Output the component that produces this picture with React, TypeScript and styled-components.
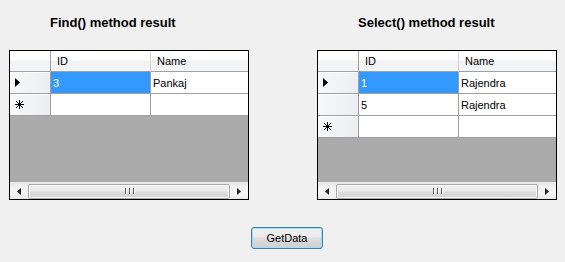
import React from "react";
import styled, { createGlobalStyle } from "styled-components";

const Global = createGlobalStyle`
  html, body { margin: 0; padding: 0; background: #f0f0f0; }
  body { font-family: "Liberation Sans", Arial, sans-serif; }
`;

const Page = styled.div`
  width: 565px;
  height: 262px;
  display: flex;
  flex-direction: column;
  background: #f0f0f0;
`;

const Panels = styled.div`
  display: flex;
  gap: 68px;
  padding-left: 9px;
`;

const Panel = styled.div`
  display: flex;
  flex-direction: column;
  width: 240px;
`;

const Title = styled.div`
  padding: 15px 0 0 41px;
  height: 15px;
  line-height: 15px;
  margin-bottom: 20px;
  font-size: 13px;
  font-weight: bold;
  color: #000;
  white-space: nowrap;
`;

const Grid = styled.div`
  width: 240px;
  height: 150px;
  box-sizing: border-box;
  border: 1px solid #000;
  display: flex;
  flex-direction: column;
  overflow: hidden;
  background: #ababab;
`;

const Body = styled.div`
  flex: 1;
  display: flex;
  flex-direction: column;
  overflow: hidden;
`;

const Row = styled.div<{ $h: number }>`
  display: flex;
  height: ${(p) => p.$h}px;
  flex: none;
`;

const HeaderCell = styled.div<{ $w: number; $first?: boolean }>`
  width: ${(p) => p.$w}px;
  flex: none;
  box-sizing: border-box;
  height: 100%;
  border-bottom: 1px solid #a0a0a0;
  border-right: 1px solid ${(p) => (p.$first ? "#a0a0a0" : "#d5d5d5")};
  background: linear-gradient(#ffffff 0%, #ffffff 45%, #f1f2f4 50%, #f4f5f7 100%);
  font-size: 11px;
  color: #000;
  padding: 4px 0 0 6px;
  white-space: nowrap;
  overflow: hidden;
`;

const RowHead = styled.div`
  width: 41px;
  flex: none;
  box-sizing: border-box;
  height: 100%;
  border-right: 1px solid #a0a0a0;
  border-bottom: 1px solid #a0a0a0;
  background: linear-gradient(90deg, #f7f8fa, #eceef1);
  box-shadow: inset 1px 1px 0 #ffffff;
  display: flex;
  align-items: center;
  padding-left: 5px;
`;

const Cell = styled.div<{ $w: number; $selected?: boolean }>`
  width: ${(p) => p.$w}px;
  flex: none;
  box-sizing: border-box;
  height: 100%;
  border-right: 1px solid #a0a0a0;
  border-bottom: 1px solid #a0a0a0;
  background: ${(p) => (p.$selected ? "#3399ff" : "#ffffff")};
  color: ${(p) => (p.$selected ? "#ffffff" : "#000000")};
  font-size: 11px;
  padding: 5px 0 0 2px;
  white-space: nowrap;
  overflow: hidden;
`;

const Scroll = styled.div`
  height: 17px;
  flex: none;
  display: flex;
  align-items: center;
  background: linear-gradient(#e8e8e8, #f4f4f4 30%, #f4f4f4 70%, #e8e8e8);
  border-top: 1px solid #ececec;
  box-sizing: border-box;
`;

const Arrow = styled.div`
  width: 18px;
  height: 100%;
  flex: none;
  display: flex;
  align-items: center;
  justify-content: center;
`;

const Thumb = styled.div`
  flex: 1;
  height: 15px;
  box-sizing: border-box;
  border: 1px solid #a9a9a9;
  border-radius: 2px;
  background: linear-gradient(#f3f3f3 0%, #eaeaea 45%, #dcdcdc 55%, #d4d4d4 100%);
  box-shadow: inset 0 0 0 1px #fbfbfb;
  display: flex;
  align-items: center;
  justify-content: center;
  gap: 1px;
`;

const Grip = styled.span`
  width: 1px;
  height: 6px;
  background: #5a5a5a;
  box-shadow: 1px 0 0 #fff;
  margin: 0 1px;
`;

const Footer = styled.div`
  display: flex;
  justify-content: center;
  padding-left: 9px;
  margin-top: 27px;
`;

const Button = styled.button`
  width: 72px;
  height: 22px;
  box-sizing: border-box;
  border: 1px solid #3c7fb1;
  border-radius: 3px;
  background: linear-gradient(#eaf6fd 0%, #d9f0fc 45%, #bee6fd 50%, #a7d9f5 100%);
  background: linear-gradient(#f2f2f2 0%, #ebebeb 45%, #dddddd 50%, #cfcfcf 100%);
  box-shadow: inset 0 0 0 1px #a6dcf6;
  font-family: "Liberation Sans", Arial, sans-serif;
  font-size: 11px;
  color: #000;
  padding: 0;
  cursor: default;
`;

const Triangle = () => (
  <svg width="5" height="9" viewBox="0 0 5 9">
    <path d="M0 0 L5 4.5 L0 9 Z" fill="#000" />
  </svg>
);

const Star = () => (
  <svg width="9" height="9" viewBox="0 0 9 9">
    <g stroke="#000" strokeWidth="1">
      <line x1="4.5" y1="0" x2="4.5" y2="9" />
      <line x1="0" y1="4.5" x2="9" y2="4.5" />
      <line x1="1" y1="1" x2="8" y2="8" />
      <line x1="8" y1="1" x2="1" y2="8" />
    </g>
  </svg>
);

const ScrollArrow = ({ dir }: { dir: "l" | "r" }) => (
  <svg width="4" height="7" viewBox="0 0 4 7">
    <path d={dir === "l" ? "M4 0 L0 3.5 L4 7 Z" : "M0 0 L4 3.5 L0 7 Z"} fill="#222" />
  </svg>
);

type Rec = { id: string; name: string };

const DataGrid = ({ rows }: { rows: Rec[] }) => (
  <Grid>
    <Body>
      <Row $h={21}>
        <HeaderCell $w={41} $first />
        <HeaderCell $w={100}>ID</HeaderCell>
        <HeaderCell $w={120}>Name</HeaderCell>
      </Row>
      {rows.map((r, i) => (
        <Row $h={22} key={i}>
          <RowHead>{i === 0 ? <Triangle /> : null}</RowHead>
          <Cell $w={100} $selected={i === 0}>
            {r.id}
          </Cell>
          <Cell $w={120}>{r.name}</Cell>
        </Row>
      ))}
      <Row $h={22}>
        <RowHead>
          <Star />
        </RowHead>
        <Cell $w={100} />
        <Cell $w={120} />
      </Row>
    </Body>
    <Scroll>
      <Arrow>
        <ScrollArrow dir="l" />
      </Arrow>
      <Thumb>
        <Grip />
        <Grip />
        <Grip />
      </Thumb>
      <Arrow>
        <ScrollArrow dir="r" />
      </Arrow>
    </Scroll>
  </Grid>
);

export default function App() {
  return (
    <Page>
      <Global />
      <Panels>
        <Panel>
          <Title>Find() method result</Title>
          <DataGrid rows={[{ id: "3", name: "Pankaj" }]} />
        </Panel>
        <Panel>
          <Title>Select() method result</Title>
          <DataGrid
            rows={[
              { id: "1", name: "Rajendra" },
              { id: "5", name: "Rajendra" },
            ]}
          />
        </Panel>
      </Panels>
      <Footer>
        <Button>GetData</Button>
      </Footer>
    </Page>
  );
}
